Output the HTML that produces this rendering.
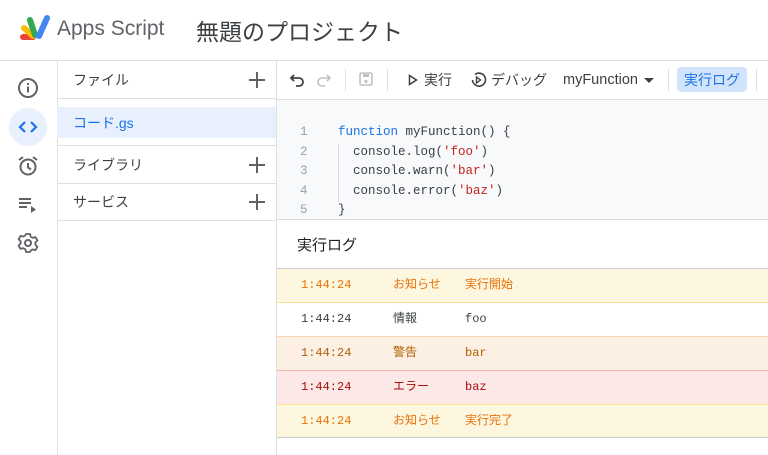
<!DOCTYPE html>
<html><head><meta charset="utf-8"><style>
*{box-sizing:border-box;margin:0;padding:0}
body{width:768px;height:455px;overflow:hidden;background:#fff;font-family:"Liberation Sans","Noto Sans CJK JP",sans-serif;color:#3c4043;position:relative}
.a{position:absolute}
.mono{font-family:"Liberation Mono","Noto Sans CJK JP",monospace}
.hl{position:absolute;left:0;height:1px;background:#e0e0e0}
.row{position:absolute;left:277px;width:491px;height:34px;font-size:12px}
.row span{position:absolute;top:0;line-height:33px}
.plus{position:absolute;left:249px;width:16px;height:16px}
.plus:before{content:"";position:absolute;left:7px;top:0;width:1.6px;height:16px;background:#5f6368}
.plus:after{content:"";position:absolute;top:7px;left:0;height:1.6px;width:16px;background:#5f6368}
</style></head><body>
<!-- header -->
<svg class="a" style="left:18px;top:14px" width="34" height="28" viewBox="0 0 34 28">
<g stroke-linecap="round" stroke-width="6" fill="none">
<line x1="5" y1="23" x2="15" y2="23" stroke="#ea4335"/>
<line x1="6" y1="14" x2="15" y2="22" stroke="#fbbc04"/>
<line x1="12" y1="6" x2="17" y2="21" stroke="#34a853"/>
<line x1="29" y1="4" x2="21" y2="22" stroke="#4285f4"/>
</g></svg>
<div class="a" style="left:57px;top:17px;font-size:21px;color:#5f6368">Apps Script</div>
<div class="a" style="left:196px;top:13px;font-size:23px;color:#3c4043">無題のプロジェクト</div>
<div class="hl" style="top:60px;width:768px"></div>
<!-- rail -->
<div class="a" style="left:57px;top:60px;width:1px;height:395px;background:#e0e0e0"></div>
<div class="a" style="left:9px;top:108px;width:38px;height:38px;border-radius:50%;background:#e8f0fe"></div>
<svg class="a" style="left:16px;top:76px" width="24" height="24" viewBox="0 0 24 24"><circle cx="12" cy="12" r="9" fill="none" stroke="#5f6368" stroke-width="2"/><rect x="11" y="10.5" width="2" height="6" fill="#5f6368"/><rect x="11" y="7" width="2" height="2" fill="#5f6368"/></svg>
<svg class="a" style="left:16px;top:115px" width="24" height="24" viewBox="0 0 24 24"><path d="M9 7l-5 5 5 5M15 7l5 5-5 5" fill="none" stroke="#1a73e8" stroke-width="2.2"/></svg>
<svg class="a" style="left:16px;top:154px" width="24" height="24" viewBox="0 0 24 24"><circle cx="12" cy="13" r="7.5" fill="none" stroke="#5f6368" stroke-width="2"/><path d="M12 9v4.5l3 2M3 6l4-3M21 6l-4-3" fill="none" stroke="#5f6368" stroke-width="2"/></svg>
<svg class="a" style="left:16px;top:193px" width="24" height="24" viewBox="0 0 24 24"><path d="M3 6h12M3 10h12M3 14h8" stroke="#5f6368" stroke-width="2"/><path d="M15 13l5 3.5-5 3.5z" fill="#5f6368"/></svg>
<svg class="a" style="left:16px;top:231px" width="24" height="24" viewBox="0 0 24 24"><circle cx="12" cy="12" r="3" fill="none" stroke="#5f6368" stroke-width="2"/><path d="M10 3h4l.6 2.6 2.2 1.3 2.6-.8 2 3.4-2 1.9v2.5l2 1.9-2 3.4-2.6-.8-2.2 1.3L14 21h-4l-.6-2.6-2.2-1.3-2.6.8-2-3.4 2-1.9v-2.5l-2-1.9 2-3.4 2.6.8 2.2-1.3z" fill="none" stroke="#5f6368" stroke-width="1.8" stroke-linejoin="round"/></svg>
<!-- files panel -->
<div class="a" style="left:276px;top:60px;width:1px;height:395px;background:#e0e0e0"></div>
<div class="a" style="left:73px;top:70px;font-size:14px">ファイル</div>
<div class="plus" style="top:72px"></div>
<div class="hl" style="left:57px;top:98px;width:219px"></div>
<div class="a" style="left:57px;top:107px;width:219px;height:31px;background:#e8f0fe"></div>
<div class="a" style="left:73px;top:113px;font-size:14px;color:#1a73e8">コード.gs</div>
<div class="hl" style="left:57px;top:145px;width:219px"></div>
<div class="a" style="left:73px;top:155px;font-size:14px">ライブラリ</div>
<div class="plus" style="top:157px"></div>
<div class="hl" style="left:57px;top:183px;width:219px"></div>
<div class="a" style="left:73px;top:192px;font-size:14px">サービス</div>
<div class="plus" style="top:194px"></div>
<div class="hl" style="left:57px;top:220px;width:219px"></div>
<!-- toolbar -->
<svg class="a" style="left:289px;top:71px" width="16" height="16" viewBox="0 0 16 16"><path d="M5 4L2 7l3 3M2 7h8a4 4 0 010 8H7" fill="none" stroke="#3c4043" stroke-width="1.8"/></svg>
<svg class="a" style="left:316px;top:71px" width="16" height="16" viewBox="0 0 16 16"><path d="M11 4l3 3-3 3M14 7H6a4 4 0 000 8h3" fill="none" stroke="#bdc1c6" stroke-width="1.6"/></svg>
<div class="a" style="left:345px;top:69px;width:1px;height:22px;background:#e0e0e0"></div>
<svg class="a" style="left:358px;top:71px" width="16" height="16" viewBox="0 0 16 16"><rect x="2" y="2" width="12" height="12" rx="1.5" fill="none" stroke="#bdc1c6" stroke-width="1.6"/><rect x="5" y="3" width="6" height="3" fill="#bdc1c6"/><circle cx="8" cy="10.5" r="1.6" fill="#bdc1c6"/></svg>
<div class="a" style="left:387px;top:69px;width:1px;height:22px;background:#e0e0e0"></div>
<svg class="a" style="left:408px;top:74px" width="10" height="12" viewBox="0 0 10 12"><path d="M1.5 1.5l7 4.5-7 4.5z" fill="none" stroke="#3c4043" stroke-width="1.5"/></svg>
<div class="a" style="left:424px;top:70px;font-size:14px">実行</div>
<svg class="a" style="left:470px;top:71px" width="18" height="18" viewBox="0 0 18 18"><path d="M5 3.5A6.5 6.5 0 112.5 9" fill="none" stroke="#3c4043" stroke-width="1.6"/><path d="M6.5 6l4 3-4 3z" fill="none" stroke="#3c4043" stroke-width="1.4"/></svg>
<div class="a" style="left:491px;top:70px;font-size:14px">デバッグ</div>
<div class="a" style="left:563px;top:72px;font-size:14.5px;color:#3c4043">myFunction</div>
<div class="a" style="left:644px;top:78px;width:0;height:0;border-left:5px solid transparent;border-right:5px solid transparent;border-top:5px solid #3c4043"></div>
<div class="a" style="left:668px;top:69px;width:1px;height:22px;background:#e0e0e0"></div>
<div class="a" style="left:677px;top:67px;width:70px;height:25px;border-radius:4px;background:#d2e3fc"></div>
<div class="a" style="left:684px;top:70px;font-size:14px;color:#1a73e8">実行ログ</div>
<div class="a" style="left:756px;top:69px;width:1px;height:22px;background:#e0e0e0"></div>
<div class="hl" style="left:277px;top:99px;width:491px"></div>
<!-- code -->
<div class="a" style="left:277px;top:100px;width:491px;height:119px;background:#f8f9fa"></div>
<div class="a mono" style="left:300px;top:123px;font-size:12.5px;line-height:19.5px;color:#9aa0a6">1<br>2<br>3<br>4<br>5</div>
<div class="a" style="left:338px;top:144px;width:1px;height:58px;background:#dadce0"></div>
<div class="a mono" style="left:338px;top:123px;font-size:12.5px;line-height:19.5px;color:#3c4043;white-space:pre"><span style="color:#1a73e8">function</span> myFunction() {
  console.log(<span style="color:#c5221f">'foo'</span>)
  console.warn(<span style="color:#c5221f">'bar'</span>)
  console.error(<span style="color:#c5221f">'baz'</span>)
}</div>
<div class="hl" style="left:277px;top:219px;width:491px;background:#dadce0"></div>
<div class="a" style="left:297px;top:234px;font-size:15px;color:#202124">実行ログ</div>
<!-- log -->
<div class="a" style="left:277px;top:268px;width:491px;height:170px;border:1.5px solid #c8cacd"></div>
<div class="row mono" style="top:269px;background:#fef7e0;color:#e8710a;border-bottom:1px solid #fde293"><span style="left:24px">1:44:24</span><span style="left:116px">お知らせ</span><span style="left:188px">実行開始</span></div>
<div class="row mono" style="top:303px;background:#fff;color:#3c4043;border-bottom:1px solid #fad2b4"><span style="left:24px">1:44:24</span><span style="left:116px">情報</span><span style="left:188px">foo</span></div>
<div class="row mono" style="top:337px;background:#fcefe3;color:#b06000;border-bottom:1px solid #f3b8a8"><span style="left:24px">1:44:24</span><span style="left:116px">警告</span><span style="left:188px">bar</span></div>
<div class="row mono" style="top:371px;background:#fce8e6;color:#a50e0e;border-bottom:1px solid #fde293"><span style="left:24px">1:44:24</span><span style="left:116px">エラー</span><span style="left:188px">baz</span></div>
<div class="row mono" style="top:405px;height:32px;background:#fef7e0;color:#e8710a"><span style="left:24px">1:44:24</span><span style="left:116px">お知らせ</span><span style="left:188px">実行完了</span></div>
</body></html>
